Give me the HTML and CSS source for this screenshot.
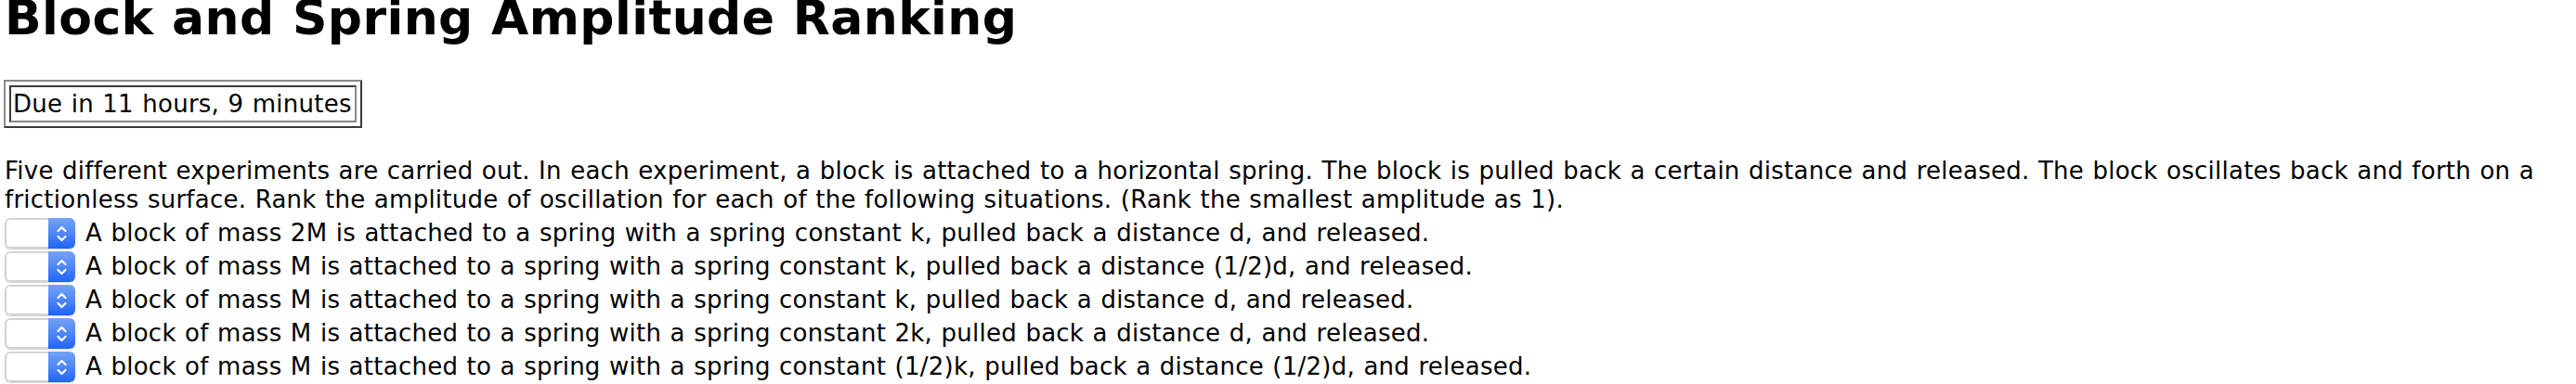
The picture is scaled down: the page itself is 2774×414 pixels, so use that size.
FILE: index.html
```html
<!DOCTYPE html>
<html>
<head>
<meta charset="utf-8">
<title>Block and Spring Amplitude Ranking</title>
<link rel="stylesheet" href="styles.css">
</head>
<body>
<h1 class="title">Block and Spring Amplitude Ranking</h1>
<div class="due"><div class="due-cell">Due in 11 hours, 9 minutes</div></div>
<p class="intro">Five different experiments are carried out. In each experiment, a block is attached to a horizontal spring. The block is pulled back a certain distance and released. The block oscillates back and forth on a frictionless surface. Rank the amplitude of oscillation for each of the following situations. (Rank the smallest amplitude as 1).</p>
<div class="rows">
  <div class="row">
    <span class="picker"><span class="picker-field"></span><span class="picker-btn"><svg viewBox="0 0 29 33" width="29" height="33"><path d="M10.5 14 L14.5 10 L18.5 14 M10.5 20 L14.5 24 L18.5 20" fill="none" stroke="#fff" stroke-width="2.2" stroke-linecap="round" stroke-linejoin="round"/></svg></span></span>
    <span class="label">A block of mass 2M is attached to a spring with a spring constant k, pulled back a distance d, and released.</span>
  </div>
  <div class="row">
    <span class="picker"><span class="picker-field"></span><span class="picker-btn"><svg viewBox="0 0 29 33" width="29" height="33"><path d="M10.5 14 L14.5 10 L18.5 14 M10.5 20 L14.5 24 L18.5 20" fill="none" stroke="#fff" stroke-width="2.2" stroke-linecap="round" stroke-linejoin="round"/></svg></span></span>
    <span class="label">A block of mass M is attached to a spring with a spring constant k, pulled back a distance (1/2)d, and released.</span>
  </div>
  <div class="row">
    <span class="picker"><span class="picker-field"></span><span class="picker-btn"><svg viewBox="0 0 29 33" width="29" height="33"><path d="M10.5 14 L14.5 10 L18.5 14 M10.5 20 L14.5 24 L18.5 20" fill="none" stroke="#fff" stroke-width="2.2" stroke-linecap="round" stroke-linejoin="round"/></svg></span></span>
    <span class="label">A block of mass M is attached to a spring with a spring constant k, pulled back a distance d, and released.</span>
  </div>
  <div class="row">
    <span class="picker"><span class="picker-field"></span><span class="picker-btn"><svg viewBox="0 0 29 33" width="29" height="33"><path d="M10.5 14 L14.5 10 L18.5 14 M10.5 20 L14.5 24 L18.5 20" fill="none" stroke="#fff" stroke-width="2.2" stroke-linecap="round" stroke-linejoin="round"/></svg></span></span>
    <span class="label">A block of mass M is attached to a spring with a spring constant 2k, pulled back a distance d, and released.</span>
  </div>
  <div class="row">
    <span class="picker"><span class="picker-field"></span><span class="picker-btn"><svg viewBox="0 0 29 33" width="29" height="33"><path d="M10.5 14 L14.5 10 L18.5 14 M10.5 20 L14.5 24 L18.5 20" fill="none" stroke="#fff" stroke-width="2.2" stroke-linecap="round" stroke-linejoin="round"/></svg></span></span>
    <span class="label">A block of mass M is attached to a spring with a spring constant (1/2)k, pulled back a distance (1/2)d, and released.</span>
  </div>
</div>
</body>
</html>
```

FILE: styles.css
```css
html, body {
  margin: 0;
  padding: 0;
  background: #ffffff;
}

body {
  padding: 0 4px 0 5px;
  font-family: "DejaVu Sans", Verdana, sans-serif;
  font-size: 26px;
  letter-spacing: 0.25px;
  word-spacing: 0.9px;
  color: #000000;
  overflow: hidden;
}

.title {
  margin: -11px 0 0 0;
  font-size: 52px;
  line-height: 60px;
  font-weight: bold;
  letter-spacing: 0.4px;
  white-space: nowrap;
}

.due {
  display: inline-block;
  margin: 37px 0 0 -1px;
  padding: 4px;
  border: 2px solid;
  border-color: #8a8a8a #3a3a3a #3a3a3a #8a8a8a;
}

.due-cell {
  padding: 2px 3px 2px 2px;
  border: 2px solid;
  border-color: #3a3a3a #8a8a8a #8a8a8a #3a3a3a;
  line-height: 32px;
  white-space: nowrap;
}

.intro {
  margin: 31px 0 0 0;
  line-height: 31px;
}

.rows {
  margin-top: 2px;
  display: flex;
  flex-direction: column;
}

.row {
  display: flex;
  align-items: flex-start;
  height: 36px;
  line-height: 36px;
  white-space: nowrap;
}

.picker {
  display: flex;
  flex: none;
  width: 76px;
  height: 33px;
  margin-top: 2px;
  border-radius: 6px;
  overflow: hidden;
  box-shadow: 0 1px 1px rgba(0, 0, 0, 0.18);
}

.picker-field {
  flex: 1;
  border: 2px solid #d2d2d2;
  border-right: none;
  border-radius: 6px 0 0 6px;
  background: #ffffff;
}

.picker-btn {
  display: block;
  width: 29px;
  height: 33px;
  background: linear-gradient(to bottom, #74a2f7 0%, #4f87f6 50%, #1f63f6 100%);
}

.picker-btn svg {
  display: block;
}

.label {
  margin-left: 11px;
}
```
